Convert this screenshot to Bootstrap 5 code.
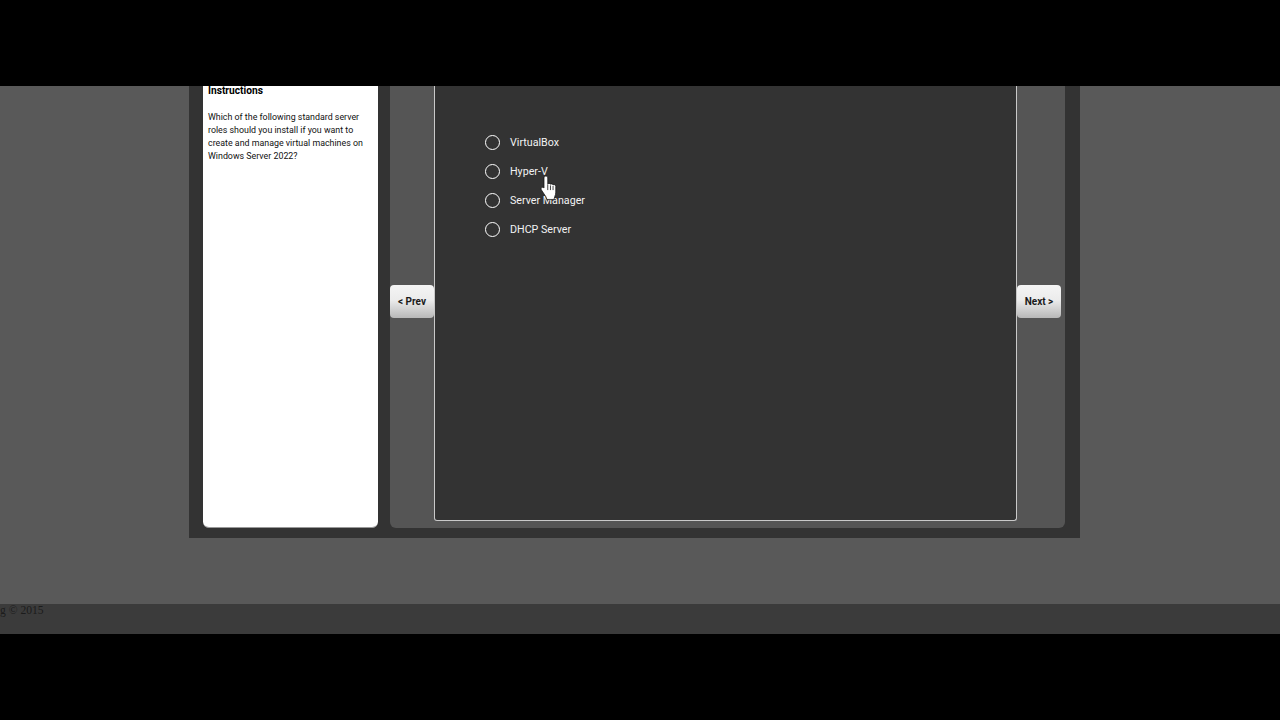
<!DOCTYPE html>
<html lang="en">
<head>
<meta charset="utf-8">
<title>Question</title>
<link rel="stylesheet" href="https://cdn.jsdelivr.net/npm/bootstrap@5.3.0/dist/css/bootstrap.min.css">
<style>
html, body { height: 720px; overflow: hidden; background: #000; }
body { font-family: Roboto, "Liberation Sans", sans-serif; }
.band-black { height: 86px; background: #000; }
.stage { height: 518px; background: #595959; overflow: hidden; }
.shell { width: 891px; height: 452px; margin-left: 189px; padding: 0 15px 10px 14px; background: #333; gap: 12px; }
.brief { width: 175px; padding: 0 5px; background: #fff; color: #111; border-radius: 0 0 6px 6px; border-bottom: 1px solid #999; font-size: 8.85px; line-height: 13px; }
.brief-title { font-size: 10.2px; font-weight: 700; line-height: 10.5px; margin: 0 0 14.5px; color: #000; }
.brief-text { margin: 0; width: 165px; }
.work { width: 675px; background: #555; border-radius: 0 0 6px 6px; padding-bottom: 7px; }
.side-left { width: 44px; }
.side-right { width: 48px; }
.stepper { display: block; width: 44px; height: 33px; margin-top: 199px; padding: 0 0 1px; border: 0; border-radius: 4px; font-size: 10px; font-weight: 700; color: #1a1a1a; background: linear-gradient(#f4f4f4, #ececec 45%, #b8b8b8); }
.stepper:hover, .stepper:active { color: #1a1a1a; background: linear-gradient(#f4f4f4, #ececec 45%, #b8b8b8); }
.question { width: 583px; background: #333; border: 1px solid #c9c9c9; border-top: 0; border-radius: 0 0 3px 3px; padding: 42px 0 0 50px; position: relative; }
.choice { height: 29px; margin: 0; padding: 0; gap: 10px; color: #f2f2f2; font-size: 10.7px; }
.choice .form-check-input { width: 15px; height: 15px; margin: 0; float: none; background: transparent; border: 1.6px solid #fff; box-shadow: none; }
.choice .form-check-label { line-height: 15px; }
.pointer { position: absolute; left: 105px; top: 89px; width: 18px; height: 26px; }
.foot { height: 30px; background: #3b3b3b; color: #1c1c1c; font-family: "Liberation Serif", serif; font-size: 11.6px; line-height: 13px; }
</style>
</head>
<body>
<div class="band-black"></div>
<div class="stage">
  <div class="shell d-flex">
    <aside class="brief">
      <h1 class="brief-title">Instructions</h1>
      <p class="brief-text">Which of the following standard server roles should you install if you want to create and manage virtual machines on Windows Server 2022?</p>
    </aside>
    <main class="work d-flex">
      <div class="side-left"><button type="button" class="btn stepper">&lt; Prev</button></div>
      <section class="question">
        <div class="form-check choice d-flex align-items-center"><input class="form-check-input" type="radio" name="role" id="r1"><label class="form-check-label" for="r1">VirtualBox</label></div>
        <div class="form-check choice d-flex align-items-center"><input class="form-check-input" type="radio" name="role" id="r2"><label class="form-check-label" for="r2">Hyper-V</label></div>
        <div class="form-check choice d-flex align-items-center"><input class="form-check-input" type="radio" name="role" id="r3"><label class="form-check-label" for="r3">Server Manager</label></div>
        <div class="form-check choice d-flex align-items-center"><input class="form-check-input" type="radio" name="role" id="r4"><label class="form-check-label" for="r4">DHCP Server</label></div>
        <svg class="pointer" viewBox="0 0 17 25" aria-hidden="true"><path d="M5.500 1c1.100 0 1.800.8 1.800 1.900v5.700c.8-.8 2.200-.6 2.600.3.800-.6 2.100-.3 2.500.6.900-.5 2.600-.1 2.600 1.400v5.600c0 1.700-.4 3-1 4.300l-.7 2.700H6.500l-1-2.600L1.100 14.200c-.9-1.500.9-3 2.300-2l.3.300V2.900C3.700 1.800 4.400 1 5.500 1z" fill="#fff" stroke="#111" stroke-width=".7"/><path d="M7.300 9v5.500M9.900 10v4.500M12.400 10.500v4" stroke="#222" stroke-width=".8" fill="none"/></svg>
      </section>
      <div class="side-right"><button type="button" class="btn stepper">Next &gt;</button></div>
    </main>
  </div>
</div>
<footer class="foot">
  <div>g © 2015</div>
</footer>
</body>
</html>
